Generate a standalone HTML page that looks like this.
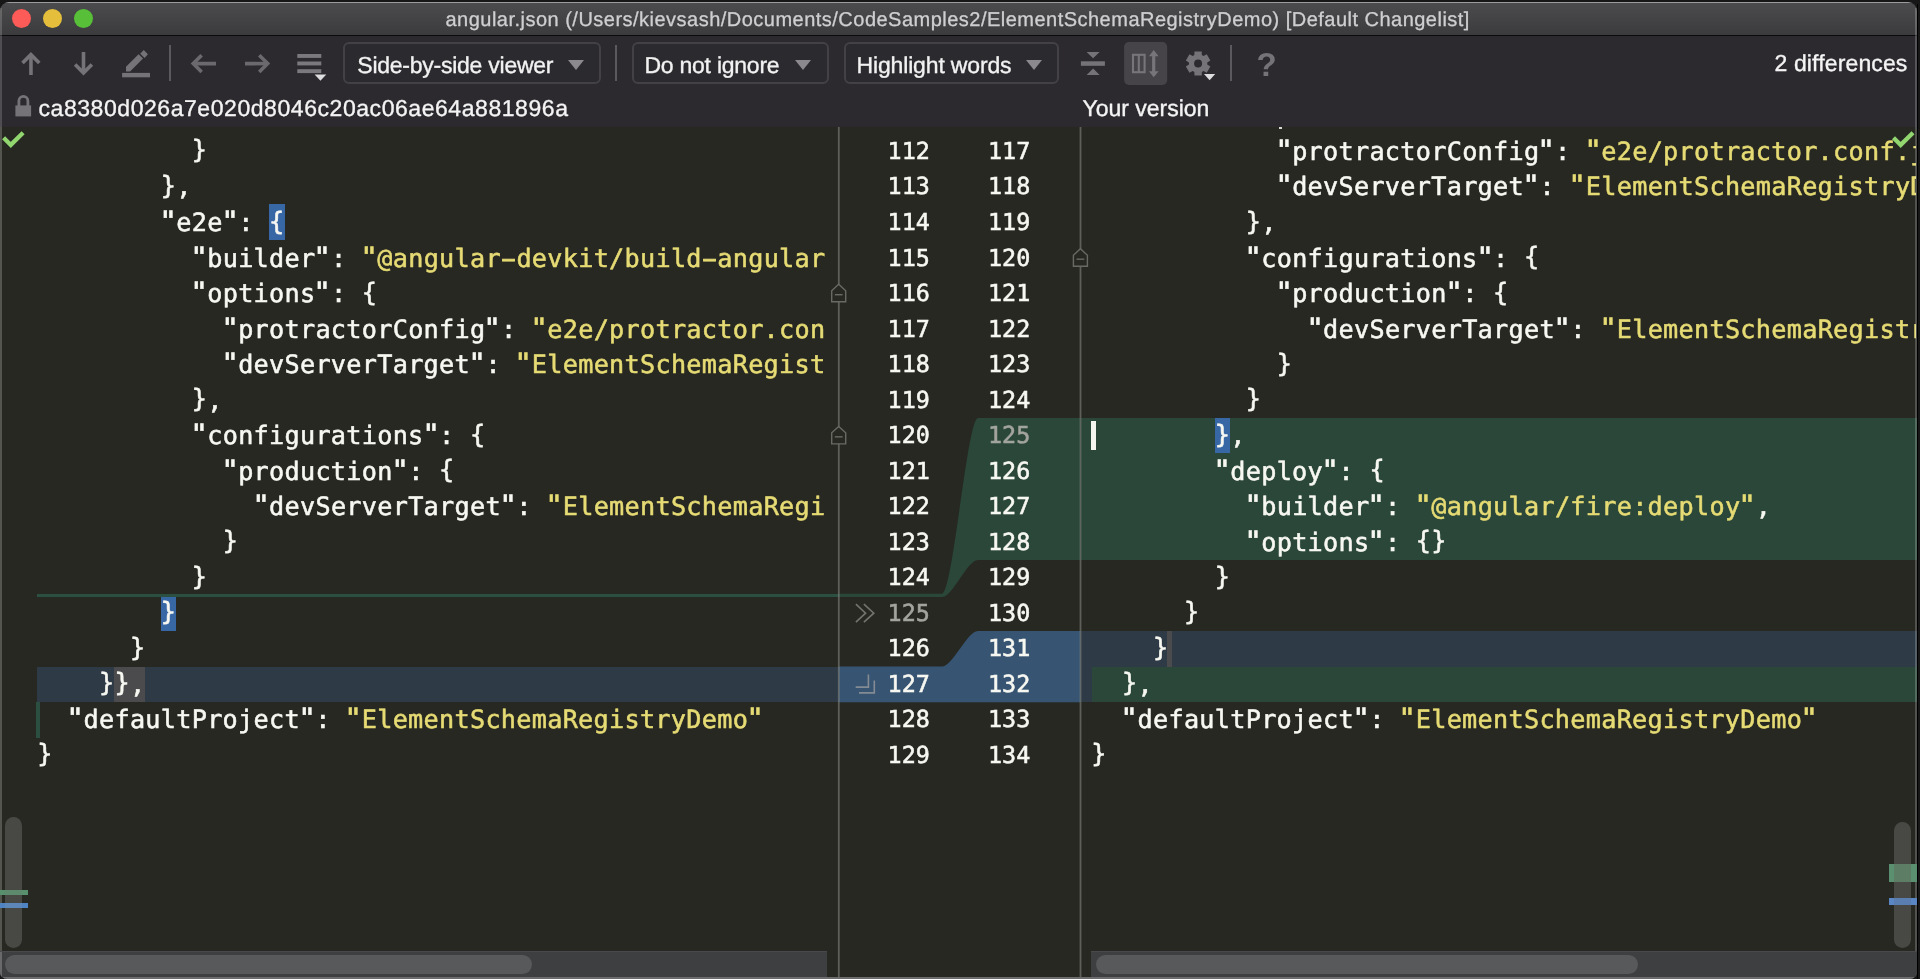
<!DOCTYPE html>
<html lang="en"><head><meta charset="utf-8"><title>angular.json diff</title>
<style>
html,body{margin:0;padding:0;background:#171718;}
body{text-rendering:geometricPrecision;width:1920px;height:979px;overflow:hidden;position:relative;font-family:"Liberation Sans",sans-serif;}
.abs{position:absolute;}
#win{will-change:transform;position:absolute;left:0;top:2px;width:1917px;height:977px;border-radius:9px 9px 7px 7px;overflow:hidden;background:#272822;}
#title{position:absolute;left:0;top:0;width:100%;height:33px;background:linear-gradient(#4b4b4d,#3b3b3e);border-top:1px solid #9c9c9e;box-sizing:border-box;}
#tline{position:absolute;left:0;top:32.5px;width:100%;height:1.7px;background:#0b0b0c;}
#ttext{position:absolute;left:445.5px;top:7.3px;font-size:20px;letter-spacing:0.484px;color:#cfcfd1;-webkit-text-stroke:0.3px #cfcfd1;white-space:nowrap;line-height:22px;}
.tl{position:absolute;top:7px;width:19px;height:19px;border-radius:50%;}
#tool{position:absolute;left:0;top:34.2px;width:100%;height:90.6px;background:#2c2a2f;}
.dd{position:absolute;top:5.8px;height:42.5px;border:2px solid #434146;border-radius:6px;box-sizing:border-box;background:#2b2a2f;}
.dd span{-webkit-text-stroke:0.35px #f2f2f2;position:absolute;left:12.3px;top:8px;font-size:23px;line-height:26px;color:#f2f2f2;white-space:nowrap;}
.dd i{position:absolute;top:16.2px;width:0;height:0;border-left:8.5px solid transparent;border-right:8.5px solid transparent;border-top:10px solid #8b898d;}
.sep{position:absolute;top:9px;width:2px;height:35.6px;background:#5b595d;}
.hdr{-webkit-text-stroke:0.35px #f4f4f4;position:absolute;font-size:23px;line-height:26px;color:#f4f4f4;white-space:nowrap;}
#code{position:absolute;left:0;top:125px;width:1917px;height:852px;overflow:hidden;}
.pane{position:absolute;top:0;height:851px;overflow:hidden;}
.ln{-webkit-text-stroke:0.55px;position:absolute;white-space:pre;font-family:"DejaVu Sans Mono","Liberation Mono",monospace;font-size:25.2px;letter-spacing:0.289px;line-height:35.53px;height:35.53px;color:#f8f8f2;}
.s{color:#e6db74;}
.ln u{text-decoration:none;display:inline-block;transform:scaleX(1.85);}
.ln b{font-weight:normal;position:relative;top:-1.5px;}
.ln i{font-style:normal;display:inline-block;transform:translate(-0.5px,-1px) scale(1.2,1.06);}
.num{font-size:23.4px;letter-spacing:0;}
.hb{background:#33629a;display:inline-block;height:35.53px;vertical-align:top;}
.hg{background:#4b4b4e;display:inline-block;height:35.53px;vertical-align:top;}
.dim{color:#a3a49e;}
.q{position:absolute;left:1256.6px;top:11px;font-size:33px;line-height:36px;font-weight:bold;color:#757378;}
</style></head><body>
<div id="win">
<div id="title"></div><div id="tline"></div>
<div class="tl" style="left:12px;background:#fc5b57"></div>
<div class="tl" style="left:43px;background:#e5bf3c"></div>
<div class="tl" style="left:74px;background:#57c038"></div>
<div id="ttext">angular.json (/Users/kievsash/Documents/CodeSamples2/ElementSchemaRegistryDemo) [Default Changelist]</div>
<div id="tool">
<div class="sep" style="left:168.5px"></div>
<div class="dd" style="left:343px;width:258.2px"><span style="letter-spacing:-0.248px">Side-by-side viewer</span><i style="left:223.4px"></i></div>
<div class="sep" style="left:615.2px"></div>
<div class="dd" style="left:631.6px;width:197.2px"><span style="letter-spacing:-0.238px;left:10.8px">Do not ignore</span><i style="left:161.5px"></i></div>
<div class="dd" style="left:844.2px;width:214.5px"><span style="letter-spacing:-0.15px;left:10.3px">Highlight words</span><i style="left:179.6px"></i></div>
<div class="sep" style="left:1230.3px"></div>
<div class="q">?</div>
<div class="hdr" style="left:1774.5px;top:14.1px;letter-spacing:0.132px">2 differences</div>
<div class="hdr" style="left:38.5px;top:58.8px;letter-spacing:0.555px">ca8380d026a7e020d8046c20ac06ae64a881896a</div>
<div class="hdr" style="left:1082.6px;top:58.8px;letter-spacing:-0.03px">Your version</div>
</div>
<svg class="abs" style="left:0;top:0" width="1917" height="125" viewBox="0 2 1917 125">
<g fill="none" stroke="#757378" stroke-width="3.6">
<path d="M22.5,63.05 L30.9,54.65 L39.3,63.05"/><path d="M30.95,55.2 V75"/>
<path d="M75.1,64.45 L83.5,72.85 L91.9,64.45"/><path d="M83.5,52.1 V72.6"/>
</g>
<g fill="#757378">
<rect x="122.1" y="72.9" width="27.9" height="4.4"/>
<path d="M126,71.5 L126,66.8 L138.6,54.2 L143,58.6 L130.1,71.5 Z"/>
<path d="M140.2,53.75 L143.75,50 L147.9,54.2 L144.6,57.9 Z"/>
</g>
<g fill="none" stroke="#6b696e" stroke-width="3.6">
<path d="M201.65,55.2 L193.25,63.6 L201.65,72"/><path d="M193.5,63.6 H216"/>
<path d="M259.25,55.2 L267.65,63.6 L259.25,72"/><path d="M245,63.6 H267.4"/>
</g>
<g fill="#7b797e"><rect x="297.3" y="54" width="24" height="3.9"/><rect x="297.3" y="61.5" width="24" height="3.9"/><rect x="297.3" y="69.2" width="24" height="3.9"/></g>
<path d="M314.6,74.6 H326.3 L320.45,80.8 Z" fill="#dddcde"/>
<g fill="#757378"><rect x="1080.9" y="61.3" width="24" height="4.5"/><path d="M1086.6,52 H1099.6 L1093.1,58.2 Z"/><path d="M1086.6,75 H1099.6 L1093.1,68.6 Z"/></g>
<rect x="1124.1" y="42" width="43.1" height="42.9" rx="4.8" fill="#464449"/>
<g fill="none" stroke="#77757a" stroke-width="2.1"><rect x="1133" y="54.8" width="11.6" height="17.4"/><path d="M1138.8,54.8 V72.2"/></g>
<g fill="#77757a"><rect x="1152.1" y="55" width="3.2" height="17.5"/><path d="M1148.9,56.2 L1153.7,50.1 L1158.6,56.2 Z"/><path d="M1148.9,71.2 L1153.7,77.3 L1158.6,71.2 Z"/></g>
<path fill-rule="evenodd" fill="#757378" d="M1194.36,55.10 L1194.46,51.44 L1201.74,51.44 L1201.84,55.10 L1203.51,56.06 L1206.73,54.31 L1210.37,60.62 L1207.25,62.54 L1207.25,64.46 L1210.37,66.38 L1206.73,72.69 L1203.51,70.94 L1201.84,71.90 L1201.74,75.56 L1194.46,75.56 L1194.36,71.90 L1192.69,70.94 L1189.47,72.69 L1185.83,66.38 L1188.95,64.46 L1188.95,62.54 L1185.83,60.62 L1189.47,54.31 L1192.69,56.06 Z M1194.10,63.50 a4.00,4.00 0 1,0 8.00,0 a4.00,4.00 0 1,0 -8.00,0 Z"/>
<path d="M1204,74.1 H1215.2 L1209.6,80.2 Z" fill="#dddcde"/>
<g><rect x="15.4" y="105.4" width="15.7" height="11" fill="#757378"/><path d="M18.9,106 V101 a4.5,4.6 0 0 1 9,0 V106" fill="none" stroke="#757378" stroke-width="2.8"/></g>
</svg>
<div class="abs" style="left:0;top:6px;width:1.8px;height:120px;background:rgba(255,255,255,0.17)"></div>
<div class="abs" style="left:1915px;top:6px;width:2px;height:120px;background:rgba(255,255,255,0.2)"></div>
<div id="code">
<div class="abs" style="left:0;top:-0.20px;width:1917px;height:853px;background:#272822"></div>
<div class="abs" style="left:37.30px;top:539.60px;width:801.50px;height:35.53px;background:#2e3b47"></div>
<div class="abs" style="left:36.30px;top:575.13px;width:3.40px;height:35.53px;background:#2b4f41"></div>
<div class="abs" style="left:1080.50px;top:290.89px;width:840.00px;height:142.12px;background:#2a4739"></div>
<div class="abs" style="left:1080.50px;top:504.07px;width:840.00px;height:71.06px;background:#2e3b47"></div>
<div class="abs" style="left:1092.00px;top:539.60px;width:830.00px;height:35.53px;background:#2a4739"></div>
<div class="abs" style="left:1167.00px;top:504.07px;width:5.00px;height:35.53px;background:#4b4b4e"></div>
<div class="abs" style="left:269.06px;top:77.11px;width:15.46px;height:36.13px;background:#3767a5"></div>
<div class="abs" style="left:160.84px;top:468.54px;width:15.46px;height:35.53px;background:#3767a5"></div>
<div class="abs" style="left:114.45px;top:539.60px;width:30.92px;height:35.53px;background:#4b4b4e"></div>
<div class="abs" style="left:1214.84px;top:290.89px;width:15.46px;height:35.53px;background:#3767a5"></div>
<div class="abs" style="left:37.30px;top:466.70px;width:801.50px;height:3.40px;background:#2b4f41"></div>
<svg class="abs" style="left:830px;top:0" width="262" height="851" viewBox="830 127.00 262 851">
<path fill="#2a4739" d="M838.8,593.7 H942.0 C952.80,593.70 967.20,417.89 978.00,417.89 H1080.5 V560.01 H978.0 C967.20,560.01 952.80,597.10 942.00,597.10 H838.8 Z"/>
<path fill="#375573" d="M838.8,666.60 H942.0 C952.80,666.60 967.20,631.07 978.00,631.07 H1080.5 V702.13 H838.8 Z"/>
<rect x="837.9" y="126.80" width="1.8" height="860" fill="#8c8c86" fill-opacity="0.55"/>
<rect x="1079.6" y="126.80" width="1.8" height="860" fill="#8c8c86" fill-opacity="0.55"/>
<path d="M831.70,301.72 L831.70,290.72 L838.70,284.32 L845.70,290.72 L845.70,301.72 Z" fill="#272822" stroke="#6a6a64" stroke-width="1.4"/><path d="M834.80,294.72 H842.60" stroke="#6a6a64" stroke-width="1.4"/>
<path d="M831.70,443.84 L831.70,432.84 L838.70,426.44 L845.70,432.84 L845.70,443.84 Z" fill="#272822" stroke="#6a6a64" stroke-width="1.4"/><path d="M834.80,436.84 H842.60" stroke="#6a6a64" stroke-width="1.4"/>
<path d="M1073.40,266.19 L1073.40,255.19 L1080.40,248.79 L1087.40,255.19 L1087.40,266.19 Z" fill="#272822" stroke="#6a6a64" stroke-width="1.4"/><path d="M1076.50,259.19 H1084.30" stroke="#6a6a64" stroke-width="1.4"/>
<g fill="none" stroke="#74746e" stroke-width="1.6"><path d="M855.9,604.1 L865.6,613.2 L855.9,622.2"/><path d="M863.9,604.1 L873.8,613.2 L863.9,622.2"/></g>
<g fill="none" stroke="#848b93" stroke-width="1.6"><path d="M855.7,687.1 H868.4 V674.5"/><path d="M859,692.9 H874.3 V680.4"/></g>
</svg>
<div class="pane" style="left:0;width:827px">
<div class="ln" style="top:6.95px;left:191.76px"><b>}</b></div>
<div class="ln" style="top:42.48px;left:160.84px"><b>}</b>,</div>
<div class="ln" style="top:78.01px;left:160.84px"><i>"</i>e2e<i>"</i>: <b>{</b></div>
<div class="ln" style="top:113.54px;left:191.76px"><i>"</i>builder<i>"</i>: <span class="s"><i>"</i>@angular<u>-</u>devkit/build<u>-</u>angular:protractor<i>"</i></span>,</div>
<div class="ln" style="top:149.07px;left:191.76px"><i>"</i>options<i>"</i>: <b>{</b></div>
<div class="ln" style="top:184.60px;left:222.68px"><i>"</i>protractorConfig<i>"</i>: <span class="s"><i>"</i>e2e/protractor.conf.js<i>"</i></span>,</div>
<div class="ln" style="top:220.13px;left:222.68px"><i>"</i>devServerTarget<i>"</i>: <span class="s"><i>"</i>ElementSchemaRegistryDemo:serve<i>"</i></span></div>
<div class="ln" style="top:255.66px;left:191.76px"><b>}</b>,</div>
<div class="ln" style="top:291.19px;left:191.76px"><i>"</i>configurations<i>"</i>: <b>{</b></div>
<div class="ln" style="top:326.72px;left:222.68px"><i>"</i>production<i>"</i>: <b>{</b></div>
<div class="ln" style="top:362.25px;left:253.60px"><i>"</i>devServerTarget<i>"</i>: <span class="s"><i>"</i>ElementSchemaRegistryDemo:serve:production<i>"</i></span></div>
<div class="ln" style="top:397.78px;left:222.68px"><b>}</b></div>
<div class="ln" style="top:433.31px;left:191.76px"><b>}</b></div>
<div class="ln" style="top:468.84px;left:160.84px"><b>}</b></div>
<div class="ln" style="top:504.37px;left:129.91px"><b>}</b></div>
<div class="ln" style="top:539.90px;left:98.99px"><b>}</b><b>}</b>,</div>
<div class="ln" style="top:575.43px;left:68.07px"><i>"</i>defaultProject<i>"</i>: <span class="s"><i>"</i>ElementSchemaRegistryDemo<i>"</i></span></div>
<div class="ln" style="top:610.96px;left:37.15px"><b>}</b></div>
</div>
<div class="pane" style="left:1082px;width:833.5px">
<div class="ln" style="top:6.95px;left:194.68px"><i>"</i>protractorConfig<i>"</i>: <span class="s"><i>"</i>e2e/protractor.conf.js<i>"</i></span>,</div>
<div class="ln" style="top:42.48px;left:194.68px"><i>"</i>devServerTarget<i>"</i>: <span class="s"><i>"</i>ElementSchemaRegistryDemo:serve<i>"</i></span></div>
<div class="ln" style="top:78.01px;left:163.76px"><b>}</b>,</div>
<div class="ln" style="top:113.54px;left:163.76px"><i>"</i>configurations<i>"</i>: <b>{</b></div>
<div class="ln" style="top:149.07px;left:194.68px"><i>"</i>production<i>"</i>: <b>{</b></div>
<div class="ln" style="top:184.60px;left:225.60px"><i>"</i>devServerTarget<i>"</i>: <span class="s"><i>"</i>ElementSchemaRegistryDemo:serve:production<i>"</i></span></div>
<div class="ln" style="top:220.13px;left:194.68px"><b>}</b></div>
<div class="ln" style="top:255.66px;left:163.76px"><b>}</b></div>
<div class="ln" style="top:291.19px;left:132.84px"><b>}</b>,</div>
<div class="ln" style="top:326.72px;left:132.84px"><i>"</i>deploy<i>"</i>: <b>{</b></div>
<div class="ln" style="top:362.25px;left:163.76px"><i>"</i>builder<i>"</i>: <span class="s"><i>"</i>@angular/fire:deploy<i>"</i></span>,</div>
<div class="ln" style="top:397.78px;left:163.76px"><i>"</i>options<i>"</i>: <b>{</b><b>}</b></div>
<div class="ln" style="top:433.31px;left:132.84px"><b>}</b></div>
<div class="ln" style="top:468.84px;left:101.91px"><b>}</b></div>
<div class="ln" style="top:504.37px;left:70.99px"><b>}</b></div>
<div class="ln" style="top:539.90px;left:40.07px"><b>}</b>,</div>
<div class="ln" style="top:575.43px;left:40.07px"><i>"</i>defaultProject<i>"</i>: <span class="s"><i>"</i>ElementSchemaRegistryDemo<i>"</i></span></div>
<div class="ln" style="top:610.96px;left:9.15px"><b>}</b></div>
</div>
<div class="ln num" style="left:887.60px;top:6.95px">112</div>
<div class="ln num" style="left:988.00px;top:6.95px">117</div>
<div class="ln num" style="left:887.60px;top:42.48px">113</div>
<div class="ln num" style="left:988.00px;top:42.48px">118</div>
<div class="ln num" style="left:887.60px;top:78.01px">114</div>
<div class="ln num" style="left:988.00px;top:78.01px">119</div>
<div class="ln num" style="left:887.60px;top:113.54px">115</div>
<div class="ln num" style="left:988.00px;top:113.54px">120</div>
<div class="ln num" style="left:887.60px;top:149.07px">116</div>
<div class="ln num" style="left:988.00px;top:149.07px">121</div>
<div class="ln num" style="left:887.60px;top:184.60px">117</div>
<div class="ln num" style="left:988.00px;top:184.60px">122</div>
<div class="ln num" style="left:887.60px;top:220.13px">118</div>
<div class="ln num" style="left:988.00px;top:220.13px">123</div>
<div class="ln num" style="left:887.60px;top:255.66px">119</div>
<div class="ln num" style="left:988.00px;top:255.66px">124</div>
<div class="ln num" style="left:887.60px;top:291.19px">120</div>
<div class="ln num dim" style="left:988.00px;top:291.19px">125</div>
<div class="ln num" style="left:887.60px;top:326.72px">121</div>
<div class="ln num" style="left:988.00px;top:326.72px">126</div>
<div class="ln num" style="left:887.60px;top:362.25px">122</div>
<div class="ln num" style="left:988.00px;top:362.25px">127</div>
<div class="ln num" style="left:887.60px;top:397.78px">123</div>
<div class="ln num" style="left:988.00px;top:397.78px">128</div>
<div class="ln num" style="left:887.60px;top:433.31px">124</div>
<div class="ln num" style="left:988.00px;top:433.31px">129</div>
<div class="ln num dim" style="left:887.60px;top:468.84px">125</div>
<div class="ln num" style="left:988.00px;top:468.84px">130</div>
<div class="ln num" style="left:887.60px;top:504.37px">126</div>
<div class="ln num" style="left:988.00px;top:504.37px">131</div>
<div class="ln num" style="left:887.60px;top:539.90px">127</div>
<div class="ln num" style="left:988.00px;top:539.90px">132</div>
<div class="ln num" style="left:887.60px;top:575.43px">128</div>
<div class="ln num" style="left:988.00px;top:575.43px">133</div>
<div class="ln num" style="left:887.60px;top:610.96px">129</div>
<div class="ln num" style="left:988.00px;top:610.96px">134</div>
<div class="abs" style="left:1279.40px;top:-0.10px;width:2.40px;height:1.90px;background:#d9d9d3"></div>
<div class="abs" style="left:1091.20px;top:294.00px;width:4.40px;height:28.80px;background:#f5f5f0"></div>
<svg class="abs" style="left:0;top:0" width="1917" height="30" viewBox="0 127.00 1917 30"><g fill="none" stroke="#92d670" stroke-width="4.3"><path d="M3.6,137.7 L10.8,144.9 L23.1,132.8"/><path d="M1893.5,137.7 L1900.7,144.9 L1913,132.8"/></g></svg>
<div class="abs" style="left:0.00px;top:-0.20px;width:1.80px;height:860.00px;background:#55554f"></div>
<div class="abs" style="left:1915px;top:0;width:2px;height:852px;background:rgba(255,255,255,0.2)"></div>
<div class="abs" style="left:0.00px;top:823.80px;width:827.00px;height:26.00px;background:#3e3f41"></div>
<div class="abs" style="left:1091.00px;top:823.80px;width:826.00px;height:26.00px;background:#3e3f41"></div>
<div class="abs" style="left:4.60px;top:828.00px;width:527.40px;height:18.70px;background:#58595b;border-radius:9.4px"></div>
<div class="abs" style="left:1096.00px;top:828.00px;width:541.50px;height:18.70px;background:#58595b;border-radius:9.4px"></div>
<div class="abs" style="left:4.65px;top:690.40px;width:17.50px;height:130.60px;background:#484944;border-radius:8.8px"></div>
<div class="abs" style="left:1893.60px;top:695.00px;width:17.80px;height:126.00px;background:#484944;border-radius:8.9px"></div>
<div class="abs" style="left:0.00px;top:763.40px;width:28.25px;height:4.80px;background:#58906d"></div>
<div class="abs" style="left:4.65px;top:763.40px;width:17.50px;height:4.80px;background:#5d8a6c"></div>
<div class="abs" style="left:0.00px;top:775.90px;width:28.25px;height:5.10px;background:#5083c2"></div>
<div class="abs" style="left:4.65px;top:775.90px;width:17.50px;height:5.10px;background:#5c87b8"></div>
<div class="abs" style="left:1888.70px;top:737.00px;width:28.30px;height:17.50px;background:#5a9070"></div>
<div class="abs" style="left:1893.60px;top:737.00px;width:17.80px;height:17.50px;background:#5d7d65"></div>
<div class="abs" style="left:1888.70px;top:771.00px;width:28.30px;height:6.70px;background:#5a86c4"></div>
<div class="abs" style="left:1893.60px;top:771.00px;width:17.80px;height:6.70px;background:#5a7eb0"></div>
<div class="abs" style="left:0.00px;top:823.80px;width:1.80px;height:28.00px;background:#69696b"></div>
<div class="abs" style="left:0.00px;top:849.90px;width:1917.00px;height:2.20px;background:#6c6c6e"></div>
<div class="abs" style="left:0.00px;top:823.90px;width:827.00px;height:1.60px;background:#48494b"></div>
<div class="abs" style="left:1091.00px;top:823.90px;width:826.00px;height:1.60px;background:#48494b"></div>
</div>
</div>
<div class="abs" style="left:1917px;top:4px;width:1.3px;height:975px;background:#000"></div>
</body></html>
